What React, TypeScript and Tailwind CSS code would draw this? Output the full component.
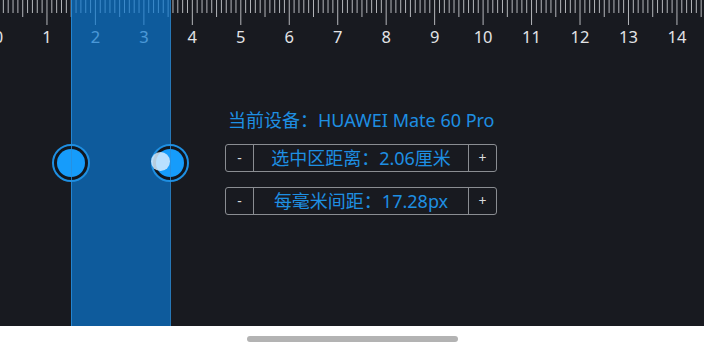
import React from 'react';

const PX_PER_MM = 4.846;
const ORIGIN = -1.5;

// 刻度尺
const Ruler: React.FC = () => {
  const ticks = [];
  for (let i = 0; i <= 146; i++) {
    const x = ORIGIN + i * PX_PER_MM;
    const len = i % 10 === 0 ? 25 : i % 5 === 0 ? 17 : 13;
    ticks.push(
      <line key={i} x1={x} x2={x} y1={0} y2={len} stroke="#b4b6ba" strokeWidth={1} />
    );
  }
  const labels = [];
  for (let cm = 0; cm <= 14; cm++) {
    const x = ORIGIN + cm * PX_PER_MM * 10;
    labels.push(
      <text
        key={cm}
        x={x}
        y={43}
        textAnchor="middle"
        fontSize={16.5}
        fill="#e2e3e6"
        fontFamily="'Noto Sans', 'Liberation Sans', sans-serif"
      >
        {cm}
      </text>
    );
  }
  return (
    <svg width={704} height={50} className="block">
      {ticks}
      {labels}
    </svg>
  );
};

const Handle: React.FC<{ touched?: boolean }> = ({ touched }) => (
  <div className="relative w-[38px] h-[38px] rounded-full border-2 border-[#1e8fe2] bg-[#12161d] p-[3px]">
    <div className="w-full h-full rounded-full bg-[#169cfb]" />
    {touched && (
      <div className="absolute left-[-2px] top-[6px] w-[19px] h-[19px] rounded-full bg-[#d6ecff]/85" />
    )}
  </div>
);

const StepBox: React.FC<{ text: string }> = ({ text }) => (
  <div className="flex h-[28px] w-[272px] rounded-[3px] border border-[#8a8d92] text-[18px] leading-none">
    <div className="flex w-[28px] items-center justify-center border-r border-[#8a8d92] text-[#d9dadd] text-[14px]">-</div>
    <div className="flex flex-1 items-center justify-center text-[#1e8fe2]">{text}</div>
    <div className="flex w-[28px] items-center justify-center border-l border-[#8a8d92] text-[#d9dadd] text-[14px]">+</div>
  </div>
);

export default function App() {
  return (
    <div
      className="flex h-[352px] w-[704px] flex-col overflow-hidden bg-white"
      style={{ fontFamily: "'Noto Sans', 'Noto Sans CJK SC', sans-serif" }}
    >
      <div className="relative h-[326px] bg-[#181a20]">
        <Ruler />

        {/* 信息面板 */}
        <div className="flex flex-col gap-[15px] pl-[225px] pt-[58px]">
          <div className="pl-[3px] text-[18px] leading-[24px] text-[#1e8fe2] -mb-[3px]">当前设备：HUAWEI Mate 60 Pro</div>
          <StepBox text="选中区距离：2.06厘米" />
          <StepBox text="每毫米间距：17.28px" />
        </div>

        {/* 选中区 */}
        <div className="absolute left-[71px] top-0 h-full w-[99px] bg-[#0a78d2]/70" />

        <div className="absolute left-[52px] top-[144px]">
          <Handle />
        </div>
        <div className="absolute left-[151px] top-[144px]">
          <Handle touched />
        </div>

        <div className="absolute left-[71px] top-0 h-full w-px bg-[#2a8fdc]/80" />
        <div className="absolute left-[170px] top-0 h-full w-px bg-[#2a8fdc]/80" />
      </div>

      <div className="flex flex-1 items-center justify-center">
        <div className="h-[6px] w-[211px] rounded-full bg-[#b3b3b3]" />
      </div>
    </div>
  );
}
